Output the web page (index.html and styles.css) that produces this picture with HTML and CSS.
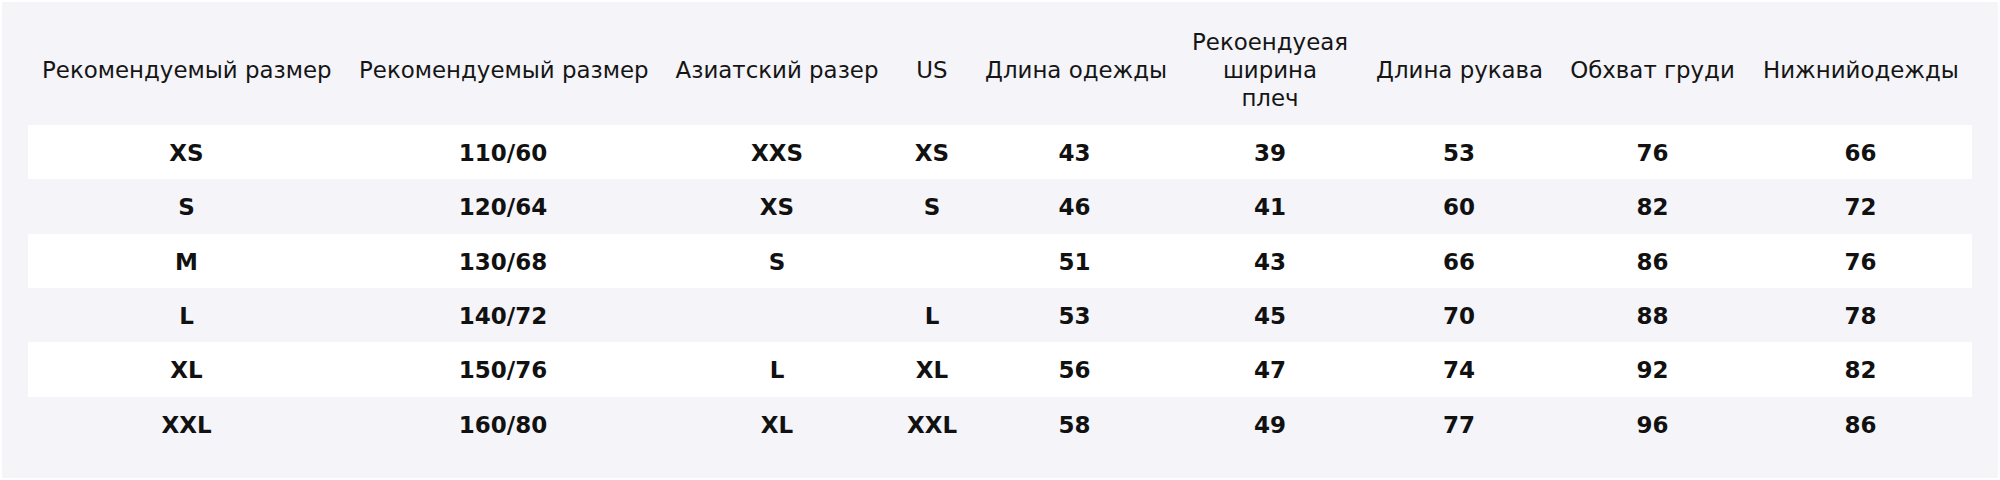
FILE: index.html
```html
<!DOCTYPE html>
<html lang="ru">
<head>
<meta charset="utf-8">
<title>Таблица размеров</title>
<link rel="stylesheet" href="styles.css">
</head>
<body>
<div class="wrap">
  <table class="sizes">
    <colgroup>
      <col class="c1"><col class="c2"><col class="c3"><col class="c4"><col class="c5"><col class="c6"><col class="c7"><col class="c8"><col class="c9">
    </colgroup>
    <thead>
      <tr>
        <th>Рекомендуемый размер</th>
        <th>Рекомендуемый размер</th>
        <th>Азиатский разер</th>
        <th>US</th>
        <th>Длина одежды</th>
        <th>Рекоендуеая<br>ширина<br>плеч</th>
        <th>Длина рукава</th>
        <th>Обхват груди</th>
        <th>Нижнийодежды</th>
      </tr>
    </thead>
    <tbody>
      <tr><td>XS</td><td>110/60</td><td>XXS</td><td>XS</td><td>43</td><td>39</td><td>53</td><td>76</td><td>66</td></tr>
      <tr><td>S</td><td>120/64</td><td>XS</td><td>S</td><td>46</td><td>41</td><td>60</td><td>82</td><td>72</td></tr>
      <tr><td>M</td><td>130/68</td><td>S</td><td></td><td>51</td><td>43</td><td>66</td><td>86</td><td>76</td></tr>
      <tr><td>L</td><td>140/72</td><td></td><td>L</td><td>53</td><td>45</td><td>70</td><td>88</td><td>78</td></tr>
      <tr><td>XL</td><td>150/76</td><td>L</td><td>XL</td><td>56</td><td>47</td><td>74</td><td>92</td><td>82</td></tr>
      <tr><td>XXL</td><td>160/80</td><td>XL</td><td>XXL</td><td>58</td><td>49</td><td>77</td><td>96</td><td>86</td></tr>
    </tbody>
  </table>
</div>
</body>
</html>
```
FILE: styles.css
```css
html, body {
  margin: 0;
  padding: 0;
  background: #ffffff;
}
body {
  font-family: "DejaVu Sans", "Noto Sans", sans-serif;
  color: #111111;
}
.wrap {
  box-sizing: border-box;
  margin: 2px;
  width: 1996px;
  height: 476px;
  background: #f4f4f9;
  padding: 11px 26px 0 26px;
}
.sizes {
  table-layout: fixed;
  border-collapse: collapse;
  width: 1944px;
}
.c1 { width: 317px; }
.c2 { width: 316px; }
.c3 { width: 232px; }
.c4 { width: 78px; }
.c5 { width: 207px; }
.c6 { width: 184px; }
.c7 { width: 194px; }
.c8 { width: 193px; }
.c9 { width: 223px; }
.sizes th {
  font-weight: normal;
  font-size: 22.9px;
  line-height: 28px;
  padding: 15px 14px 13px 14px;
  text-align: center;
  vertical-align: middle;
  white-space: nowrap;
  color: #151515;
}
.sizes td {
  font-weight: bold;
  font-size: 23px;
  line-height: 26.35px;
  padding: 15px 14px 13px 14px;
  text-align: center;
  white-space: nowrap;
  color: #111111;
}
.sizes tbody tr:nth-child(odd) {
  background: #ffffff;
}
```
